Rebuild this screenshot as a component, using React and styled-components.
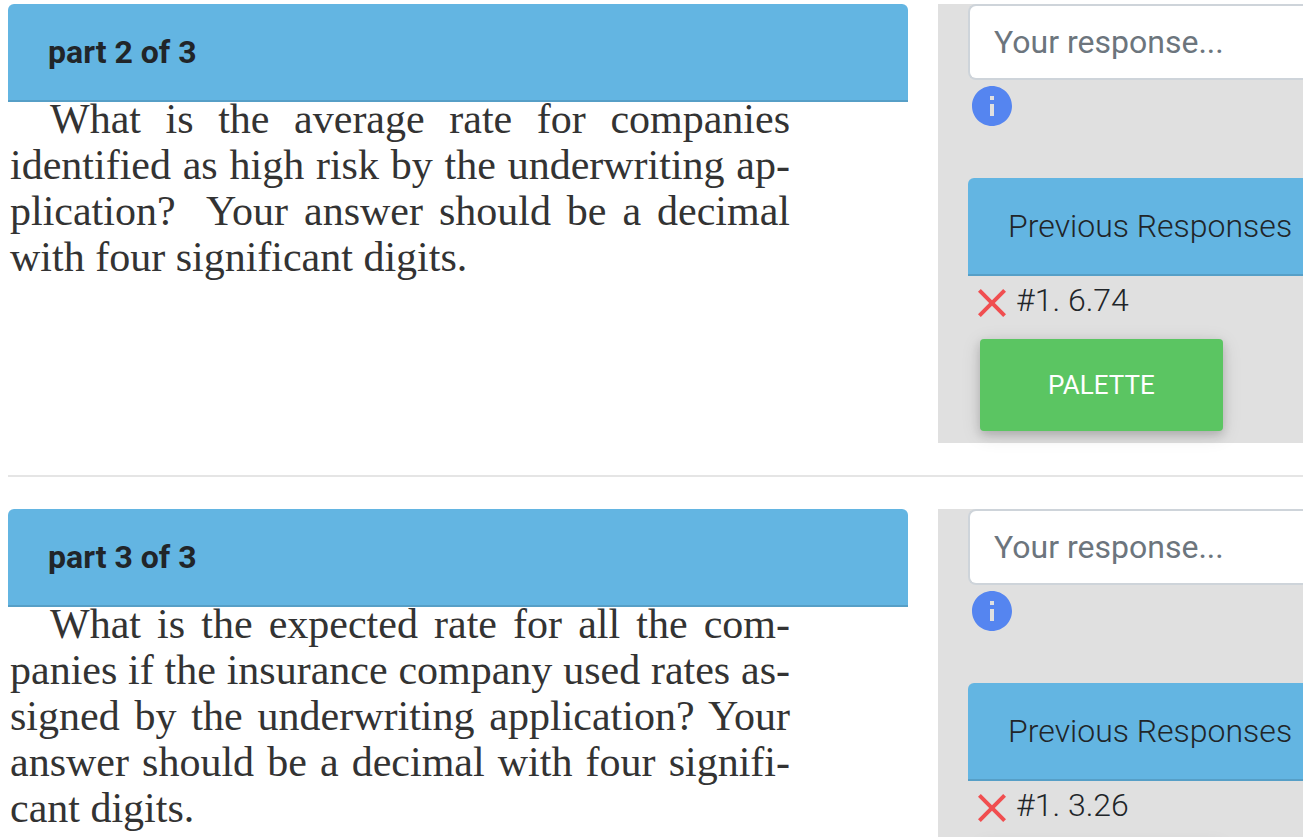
import React from "react";
import styled, { createGlobalStyle } from "styled-components";

const parts = [
  {
    id: 2,
    lines: [
      "What is the average rate for companies",
      "identified as high risk by the underwriting ap-",
      "plication?\u00a0 Your answer should be a decimal",
      "with four significant digits.",
    ],
    responses: ["6.74"],
  },
  {
    id: 3,
    lines: [
      "What is the expected rate for all the com-",
      "panies if the insurance company used rates as-",
      "signed by the underwriting application? Your",
      "answer should be a decimal with four signifi-",
      "cant digits.",
    ],
    responses: ["3.26"],
  },
];

const InfoIcon = () => (
  <Icon viewBox="0 0 24 24" fill="#5585f0" aria-hidden="true">
    <path d="M12 2C6.48 2 2 6.48 2 12s4.48 10 10 10 10-4.48 10-10S17.52 2 12 2zm1 15h-2v-6h2v6zm0-8h-2V7h2v2z" />
  </Icon>
);

const WrongIcon = () => (
  <Icon viewBox="0 0 24 24" fill="#f04e50" aria-hidden="true">
    <path d="M19 6.41L17.59 5 12 10.59 6.41 5 5 6.41 10.59 12 5 17.59 6.41 19 12 13.41 17.59 19 19 17.59 13.41 12z" />
  </Icon>
);

const Part = ({ part }) => (
  <Row>
    <section>
      <Header>
        <strong>part {part.id} of 3</strong>
      </Header>
      <Question>
        {part.lines.map((line) => (
          <span key={line}>{line} </span>
        ))}
      </Question>
    </section>
    <Panel>
      <Response
        type="text"
        aria-label={`Response to part ${part.id}`}
        placeholder="Your response..."
      />
      <InfoButton type="button" aria-label="Information">
        <InfoIcon />
      </InfoButton>
      <Header>Previous Responses</Header>
      <Responses>
        {part.responses.map((value, i) => (
          <li key={value}>
            <WrongIcon />
            <span>
              #{i + 1}. {value}
            </span>
          </li>
        ))}
      </Responses>
      <Palette type="button">PALETTE</Palette>
    </Panel>
  </Row>
);

const App = () => {
  return (
    <>
      <GlobalStyle />
      <Page>
        {parts.map((part, i) => (
          <React.Fragment key={part.id}>
            {i > 0 && <Divider />}
            <Part part={part} />
          </React.Fragment>
        ))}
      </Page>
    </>
  );
};

const GlobalStyle = createGlobalStyle`
  * {
    box-sizing: border-box;
    margin: 0;
    padding: 0;
  }
  html {
    scrollbar-width: none;
  }
  body {
    background: #fff;
    color: #212529;
    font-family: Roboto, "Liberation Sans", sans-serif;
    font-size: 32px;
    font-weight: 300;
    line-height: 48px;
  }
`;

const Page = styled.main`
  padding: 4px 0 0 8px;
`;

const Row = styled.div`
  display: grid;
  grid-template-columns: 37fr 15fr;
  gap: 30px;
`;

const Header = styled.div`
  padding: 24px 40px;
  background: #63b5e2;
  border-bottom: 2px solid #569fc7;
  border-radius: 6px 6px 0 0;
  white-space: nowrap;
  strong {
    font-weight: 700;
  }
`;

const Question = styled.p`
  max-width: 782px;
  margin-top: -6px;
  padding-left: 2px;
  color: #333;
  font-family: "Liberation Serif", serif;
  font-size: 42px;
  font-weight: 400;
  line-height: 46px;
  span {
    display: block;
    text-align-last: justify;
    white-space: nowrap;
  }
  span:first-child {
    padding-left: 40px;
  }
  span:last-child {
    text-align-last: left;
  }
`;

const Panel = styled.aside`
  display: flex;
  flex-direction: column;
  min-width: 0;
  padding-left: 30px;
  background: #e0e0e0;
  ${Header} {
    border-top-right-radius: 0;
  }
`;

const Response = styled.input`
  width: 100%;
  height: 76px;
  padding: 12px 24px;
  border: 2px solid #ced4da;
  border-right: 0;
  border-radius: 8px 0 0 8px;
  background: #fff;
  font-family: inherit;
  font-size: 32px;
  font-weight: 400;
  &::placeholder {
    color: #6c757d;
    opacity: 1;
  }
`;

const InfoButton = styled.button`
  align-self: flex-start;
  margin: 2px 0 48px;
  border: 0;
  background: none;
  cursor: pointer;
`;

const Icon = styled.svg`
  display: block;
  flex: none;
  width: 48px;
  height: 48px;
`;

const Responses = styled.ul`
  list-style: none;
  li {
    display: flex;
  }
  ${Icon} {
    margin-top: 3px;
  }
`;

const Palette = styled.button`
  align-self: flex-start;
  margin: 12px;
  padding: 22px 68px;
  border: 0;
  border-radius: 4px;
  background: #5bc562;
  box-shadow: 0 4px 10px rgba(0, 0, 0, 0.16), 0 4px 20px rgba(0, 0, 0, 0.12);
  color: #fff;
  font-family: inherit;
  font-size: 26px;
  font-weight: 400;
  line-height: 48px;
  cursor: pointer;
`;

const Divider = styled.hr`
  margin: 32px 0;
  border: 0;
  border-top: 2px solid #e5e5e5;
`;

export default App;
